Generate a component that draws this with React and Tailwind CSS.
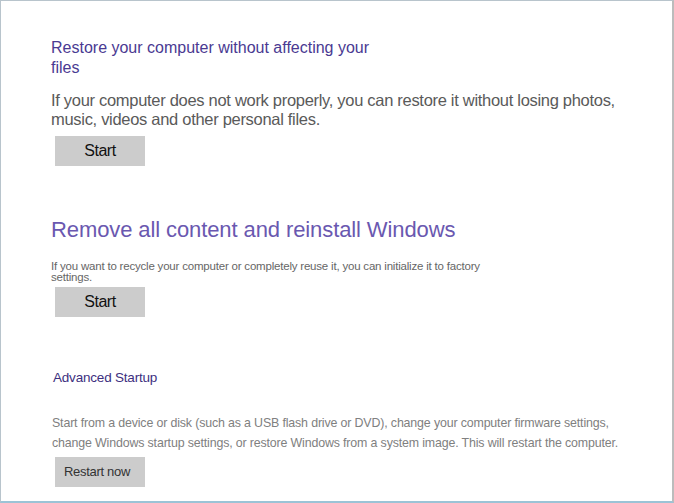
export default function App() {
  return (
    <div className="w-[674px] h-[503px] bg-white border-l border-t border-[#b8c4cc] border-r-2 border-r-[#bcbcbc] border-b-2 border-b-[#9cc3d6] overflow-hidden" style={{ fontFamily: '"Liberation Sans", Arial, sans-serif' }}>
      <div className="pl-[50px] pt-[37px]">
        <h2 className="text-[16px] leading-[20px] text-[#4a3a92] w-[330px]">Restore your computer without affecting your files</h2>
        <p className="mt-[13px] text-[16.5px] leading-[19px] text-[#5a5a5a] tracking-[-0.3px] w-[575px]">If your computer does not work properly, you can restore it without losing photos, music, videos and other personal files.</p>
        <button className="mt-[7px] ml-[4px] w-[90px] h-[30px] bg-[#cccccc] text-[16px] text-[#111] tracking-[-0.5px]">Start</button>

        <h2 className="mt-[51px] text-[22px] leading-[26px] text-[#6a58b0] tracking-[-0.1px]">Remove all content and reinstall Windows</h2>
        <p className="mt-[18px] text-[11.5px] leading-[11px] text-[#666] w-[440px] tracking-[-0.2px]">If you want to recycle your computer or completely reuse it, you can initialize it to factory settings.</p>
        <button className="mt-[4px] ml-[4px] w-[90px] h-[30px] bg-[#cccccc] text-[16px] text-[#111] tracking-[-0.5px]">Start</button>

        <h3 className="mt-[53px] ml-[2px] text-[13.5px] leading-[16px] text-[#3d2f80] tracking-[-0.2px]">Advanced Startup</h3>
        <p className="mt-[27px] ml-[1px] text-[12.4px] leading-[20px] text-[#808080] tracking-[-0.15px] w-[585px]">Start from a device or disk (such as a USB flash drive or DVD), change your computer firmware settings, change Windows startup settings, or restore Windows from a system image. This will restart the computer.</p>
        <button className="mt-[4px] ml-[4px] w-[90px] h-[30px] bg-[#cccccc] text-[13px] text-[#333] text-left pl-[9px] tracking-[-0.3px]">Restart now</button>
      </div>
    </div>
  );
}
